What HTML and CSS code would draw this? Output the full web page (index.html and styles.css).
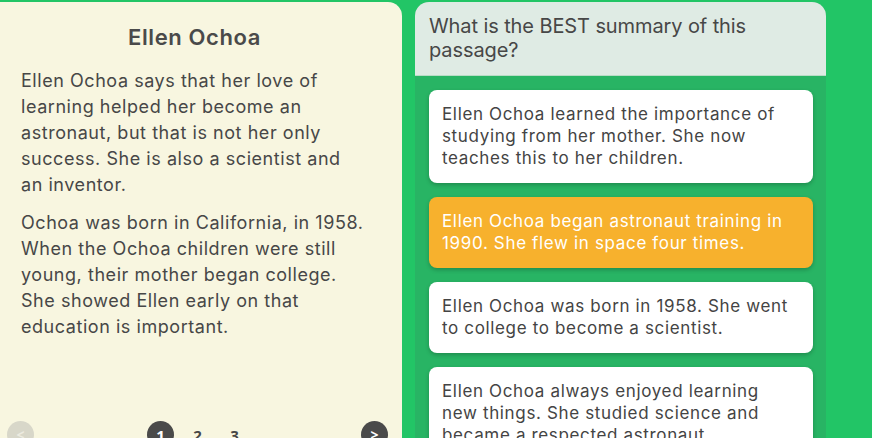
FILE: index.html
```html
<!DOCTYPE html>
<html lang="en">
<head>
<meta charset="utf-8">
<title>Ellen Ochoa</title>
<link rel="stylesheet" href="styles.css">
</head>
<body>
<div class="page">
  <section class="passage">
    <h1 class="passage-title">Ellen Ochoa</h1>
    <p class="passage-text">Ellen Ochoa says that her love of learning helped her become an astronaut, but that is not her only success. She is also a scientist and an inventor.</p>
    <p class="passage-text">Ochoa was born in California, in 1958. When the Ochoa children were still young, their mother began college. She showed Ellen early on that education is important.</p>
    <nav class="pager">
      <span class="pager-btn pager-btn--disabled">&lt;</span>
      <div class="pager-pages">
        <span class="pager-page pager-page--active">1</span>
        <span class="pager-page">2</span>
        <span class="pager-page">3</span>
      </div>
      <span class="pager-btn">&gt;</span>
    </nav>
  </section>
  <section class="quiz">
    <header class="quiz-question">What is the BEST summary of this passage?</header>
    <div class="quiz-answers">
      <div class="answer">Ellen Ochoa learned the importance of studying from her mother. She now teaches this to her children.</div>
      <div class="answer answer--selected">Ellen Ochoa began astronaut training in 1990. She flew in space four times.</div>
      <div class="answer">Ellen Ochoa was born in 1958. She went to college to become a scientist.</div>
      <div class="answer">Ellen Ochoa always enjoyed learning new things. She studied science and became a respected astronaut.</div>
    </div>
  </section>
</div>
</body>
</html>
```
FILE: styles.css
```css
* { box-sizing: border-box; }
html, body {
  margin: 0;
  height: 438px;
  overflow: hidden;
}
body {
  background: #22c566;
  font-family: Inter, "Open Sans", sans-serif;
  color: #474747;
}
.page {
  display: flex;
  gap: 13px;
  padding-top: 2px;
  height: 100%;
}
.passage {
  width: 402px;
  flex: none;
  height: 450px;
  background: #f8f6e0;
  border-top-right-radius: 14px;
  padding: 20px 38px 0 21px;
  display: flex;
  flex-direction: column;
}
.passage-title {
  margin: 0 0 16px;
  padding-left: 4px;
  text-align: center;
  font-size: 22px;
  line-height: 30px;
  font-weight: 600;
  letter-spacing: 0.6px;
  color: #4a4a4a;
}
.passage-text {
  margin: 0 0 12px;
  font-size: 18px;
  line-height: 26px;
  letter-spacing: 0.55px;
}
.pager {
  margin: auto -24px 4px -14px;
  display: flex;
  justify-content: space-between;
  align-items: center;
  height: 27px;
  font-family: "Open Sans", sans-serif;
  font-weight: 700;
  font-size: 15px;
}
.pager-btn,
.pager-page {
  width: 27px;
  height: 27px;
  border-radius: 50%;
  display: flex;
  align-items: center;
  justify-content: center;
}
.pager-btn {
  background: #4a4a4a;
  color: #fff;
  font-size: 14px;
}
.pager-btn--disabled {
  background: #d8d7c9;
  color: #ecebe0;
}
.pager-pages {
  display: flex;
  gap: 10px;
}
.pager-page {
  color: #474747;
}
.pager-page--active {
  background: #4a4a4a;
  color: #fff;
}
.quiz {
  width: 411px;
  flex: none;
  display: flex;
  flex-direction: column;
  background: #28b464;
  border-radius: 14px 14px 0 0;
  overflow: hidden;
}
.quiz-question {
  background: #dfebe4;
  border-bottom: 1px solid #b9dcc6;
  padding: 12px 14px 13px;
  font-size: 20px;
  line-height: 24px;
  letter-spacing: -0.1px;
  color: #474747;
}
.quiz-answers {
  padding: 14px 13px 0 14px;
  display: flex;
  flex-direction: column;
  gap: 14px;
}
.answer {
  background: #fff;
  border-radius: 8px;
  padding: 13px 18px 14px 13px;
  font-size: 17px;
  line-height: 22px;
  letter-spacing: 0.65px;
  color: #444;
  box-shadow: 0 2px 4px rgba(0, 0, 0, 0.22);
}
.answer--selected {
  background: #f7b12d;
  color: #fff;
}
```
